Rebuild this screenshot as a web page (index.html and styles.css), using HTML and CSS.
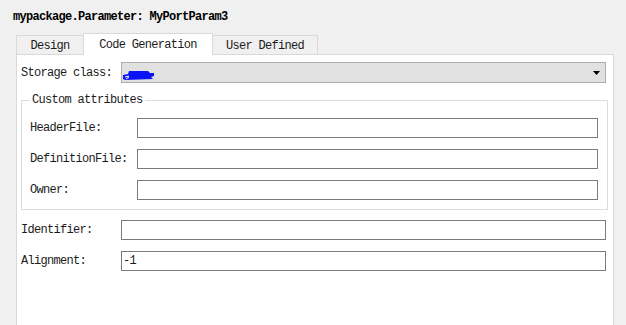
FILE: index.html
```html
<!DOCTYPE html>
<html lang="en">
<head>
    <meta charset="UTF-8">
    <title>mypackage.Parameter: MyPortParam3</title>
    <link rel="stylesheet" href="styles.css">
</head>
<body>

    <div class="window">
        <div class="title">mypackage.Parameter: MyPortParam3</div>

        <!-- Tabs -->
        <div class="tabs">
            <div class="tab tab-design">Design</div>
            <div class="tab tab-code active">Code Generation</div>
            <div class="tab tab-user">User Defined</div>
        </div>

        <div class="panel">
            <div class="row storage-row">
                <label>Storage class:</label>
                <div class="select">
                    <svg class="scribble" width="31" height="9" viewBox="0 0 31 9">
                        <path d="M0 4 L5 3 L6 0 L25 0 L27 2 L31 2 L31 5 L28 6 L30 8 L2 9 L0 8 Z" fill="#0b12f5"/>
                        <path d="M2 6 L6 5 M3 8 L6 6" stroke="#ffffff" stroke-width="1" fill="none"/>
                    </svg>
                    <svg class="arrow" width="7" height="4" viewBox="0 0 7 4">
                        <polygon points="0,0 7,0 3.5,4" fill="#000"/>
                    </svg>
                </div>
            </div>

            <!-- Custom attributes -->
            <fieldset class="group">
                <legend>Custom attributes</legend>
                <div class="row">
                    <label>HeaderFile:</label>
                    <input type="text">
                </div>
                <div class="row">
                    <label>DefinitionFile:</label>
                    <input type="text">
                </div>
                <div class="row">
                    <label>Owner:</label>
                    <input type="text">
                </div>
            </fieldset>

            <div class="row identifier-row">
                <label>Identifier:</label>
                <input type="text">
            </div>
            <div class="row alignment-row">
                <label>Alignment:</label>
                <input type="text" value="-1">
            </div>
        </div>
    </div>

</body>
</html>
```

FILE: styles.css
```css
/* Basic variables */
:root {
    --window-bg: #f0f0f0;
    --panel-bg: #ffffff;
    --tab-border: #d9d9d9;
    --group-border: #dcdcdc;
    --input-border: #7a7a7a;
    --select-bg: #e1e1e1;
    --select-border: #adadad;
    --text-color: #1c1c1c;
}

* {
    margin: 0;
    padding: 0;
    box-sizing: border-box;
}

body {
    font-family: "Liberation Mono", "DejaVu Sans Mono", monospace;
    font-size: 12px;
    letter-spacing: -0.7px;
    color: var(--text-color);
    background-color: var(--window-bg);
}

.window {
    display: flex;
    flex-direction: column;
    height: 325px;
    overflow: hidden;
}

.title {
    height: 33px;
    padding: 10px 0 0 13px;
    line-height: 14px;
    font-weight: bold;
    color: #000;
}

/* Tabs */
.tabs {
    display: flex;
    align-items: flex-end;
    height: 21px;
    padding-left: 16px;
}

.tab {
    height: 19px;
    padding-top: 2px;
    display: flex;
    align-items: center;
    justify-content: center;
    border: 1px solid var(--tab-border);
    border-bottom: none;
    background-color: var(--window-bg);
    line-height: 14px;
}

.tab-design {
    width: 67px;
    border-right: none;
}

.tab-code {
    width: 130px;
}

.tab-user {
    width: 105px;
    border-left: none;
}

.tab.active {
    height: 22px;
    margin-bottom: -1px;
    padding-top: 0;
    background-color: var(--panel-bg);
    position: relative;
    z-index: 1;
}

/* Panel */
.panel {
    flex: 1;
    margin: 0 12px 0 16px;
    padding: 7px 5px 0 4px;
    background-color: var(--panel-bg);
    border: 1px solid var(--tab-border);
    border-bottom: none;
}

.row {
    display: flex;
    align-items: center;
    height: 20px;
}

.row label {
    flex: none;
    width: 100px;
    line-height: 14px;
}

.row input {
    flex: 1;
    min-width: 0;
    height: 20px;
    margin-right: 2px;
    padding: 0 1px;
    border: 1px solid var(--input-border);
    font: inherit;
    letter-spacing: inherit;
    color: var(--text-color);
    background-color: #fff;
    outline: none;
}

.storage-row {
    height: 21px;
}

.select {
    flex: 1;
    height: 21px;
    margin-right: 2px;
    padding: 0 5px 0 1px;
    display: flex;
    align-items: center;
    justify-content: space-between;
    background-color: var(--select-bg);
    border: 1px solid var(--select-border);
}

.scribble {
    flex: none;
    margin-top: 6px;
}

.arrow {
    flex: none;
}

/* Custom attributes group */
.group {
    margin-top: 10px;
    padding: 11px 9px 9px 8px;
    border: 1px solid var(--group-border);
    min-width: 0;
}

.group legend {
    padding: 0 2px;
    line-height: 14px;
}

.group .row label {
    width: 107px;
}

.group .row input {
    margin-right: 0;
}

.group .row + .row {
    margin-top: 11px;
}

.identifier-row {
    margin-top: 10px;
}

.alignment-row {
    margin-top: 11px;
}
```
